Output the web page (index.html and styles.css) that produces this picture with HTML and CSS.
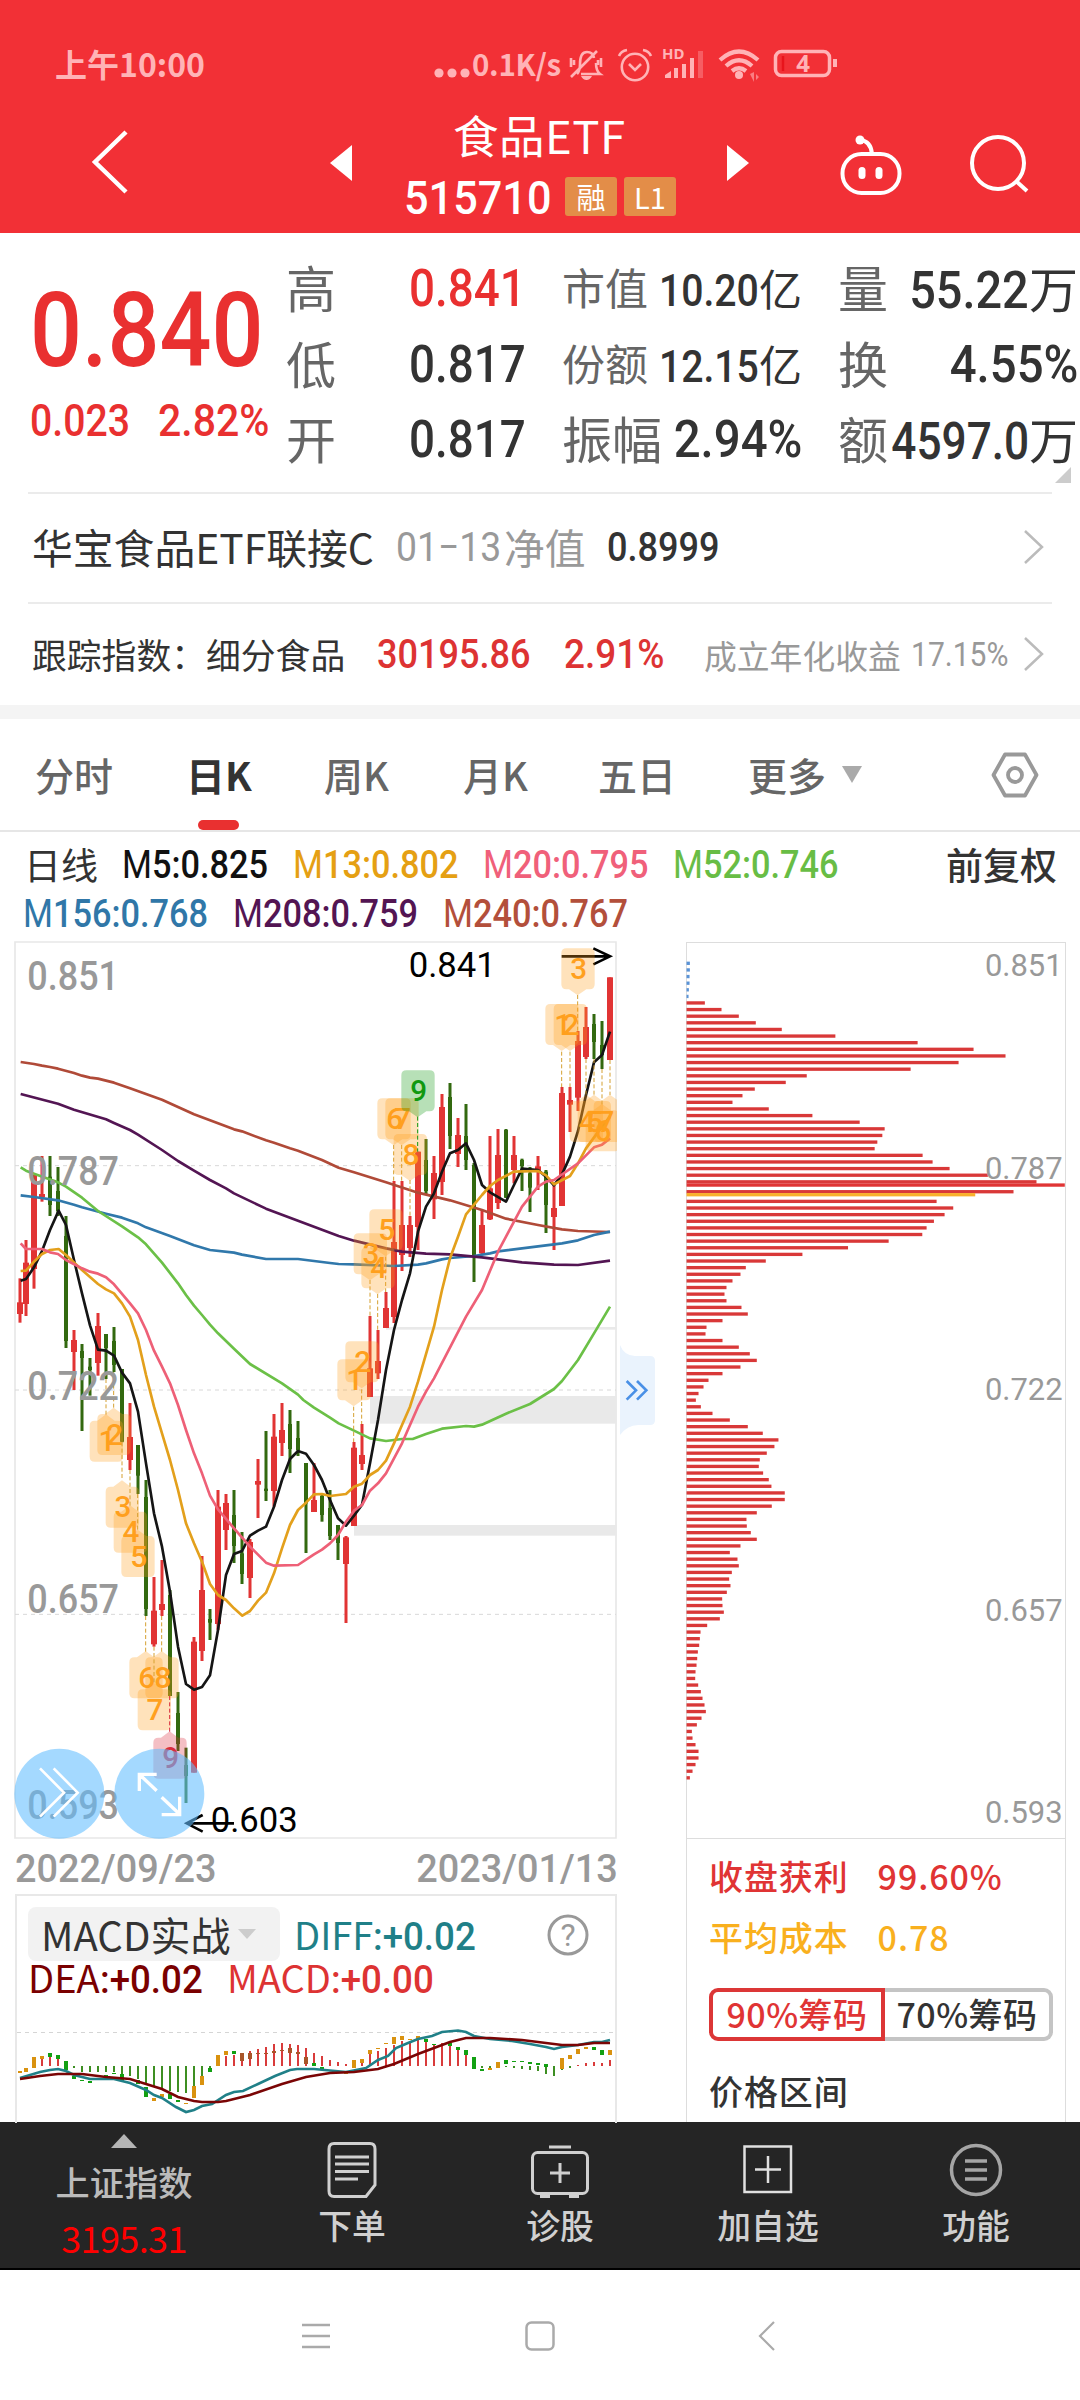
FILE: index.html
```html
<!DOCTYPE html>
<html lang="zh-CN">
<head>
<meta charset="utf-8">
<title>食品ETF 515710</title>
<link rel="stylesheet" href="styles.css">
</head>
<body>
<div class="screen">
  <header class="top">
    <div class="status">
      <span class="clock">上午10:00</span>
      <svg class="dots" width="36" height="10" viewBox="0 0 36 10"><circle cx="5" cy="5" r="4.6"/><circle cx="18" cy="5" r="4.6"/><circle cx="31" cy="5" r="4.6"/></svg>
      <span class="speed">0.1K/s</span>
      <svg class="status-icons" width="272" height="36" viewBox="568 47 272 36">
        <g fill="none" stroke="#ffb3b6" stroke-width="2.6">
          <path d="M577 74Q580 71 580 64Q580 52 587 52Q593 52 594 58M596 63Q596 71 600 74H581M571 77L597 51M571 58V67M574 60V65M601 58V67M598 60V65"/>
          <circle cx="635" cy="67" r="13.2"/><path d="M629 64L635 70L641 64M619 56Q621 51 627 50M651 56Q649 51 643 50"/>
        </g>
        <g fill="#ffb3b6">
          <path d="M581 76H592Q590 80 586.500 80Q583 80 581 76ZM665 78V75L671 71V78ZM674 68H678V78H674ZM682 64H686V78H682ZM690 58H694V78H690Z"/>
          <path d="M698 51H703V78H698Z" opacity=".35"/>
          <text x="662" y="59" class="hd">HD</text>
          <circle cx="739" cy="75" r="4"/>
          <path d="M750 74L754 82V72ZM756 74V80L759 77Z" opacity=".6"/>
        </g>
        <g fill="none" stroke="#ffb3b6" stroke-width="4.200"><path d="M720 60Q739 43 758 60M726 66Q739 54.500 752 66M732 71Q739 65.500 746 71"/></g>
        <rect x="775.500" y="51.500" width="54" height="24" rx="6" fill="none" stroke="#ffb3b6" stroke-width="3.500"/>
        <path d="M783 56V71" stroke="#e8141c" stroke-width="2.500"/><path d="M835 59V67" stroke="#ffb3b6" stroke-width="4"/>
        <text x="803" y="71.500" text-anchor="middle" class="batt">4</text>
      </svg>
    </div>
    <div class="titlebar">
      <svg class="back" width="40" height="68" viewBox="90 128 40 68"><path d="M126 132L95 162L126 192" fill="none" stroke="#fff" stroke-width="4.500"/></svg>
      <svg class="prev" width="22" height="36" viewBox="0 0 22 36"><path d="M22 0V36L0 18Z" fill="#fff"/></svg>
      <div class="title">
        <h1>食品ETF</h1>
        <div class="code"><span class="num code-num">515710</span><span class="tag tag-r">融</span><span class="tag tag-l">L1</span></div>
      </div>
      <svg class="next" width="22" height="36" viewBox="0 0 22 36"><path d="M0 0V36L22 18Z" fill="#fff"/></svg>
      <svg class="robot" width="66" height="64" viewBox="838 134 66 64"><g fill="none" stroke="#fff" stroke-width="4"><rect x="842.500" y="154" width="57" height="39" rx="19"/><path d="M860 140Q871 141 872 154"/></g><circle cx="860" cy="140" r="4.500" fill="#fff"/><rect x="858.500" y="167" width="7" height="12" rx="3.500" fill="#fff"/><rect x="875.500" y="167" width="7" height="12" rx="3.500" fill="#fff"/></svg>
      <svg class="search" width="64" height="60" viewBox="968 133 64 60"><g fill="none" stroke="#fff" stroke-width="4"><circle cx="998" cy="163" r="26"/><path d="M1016 181L1027 191"/></g></svg>
    </div>
  </header>

  <section class="quote">
    <div class="price">
      <div class="num last">0.840</div>
      <div class="chg"><span class="num">0.023</span><span class="num rate">2.82%</span></div>
    </div>
    <dl class="grid">
      <dt>高</dt><dd class="num up">0.841</dd><dt class="m s">市值</dt><dd class="mix s"><span class="num">10.20</span>亿</dd><dt class="r">量</dt><dd class="mix"><span class="num">55.22</span>万</dd>
      <dt>低</dt><dd class="num">0.817</dd><dt class="m s">份额</dt><dd class="mix s"><span class="num">12.15</span>亿</dd><dt class="r">换</dt><dd class="num rate">4.55%</dd>
      <dt>开</dt><dd class="num">0.817</dd><dt class="m">振幅</dt><dd class="num rate">2.94%</dd><dt class="r">额</dt><dd class="mix"><span class="num long">4597.0</span>万</dd>
    </dl>
    <i class="corner"></i>
  </section>

  <section class="link fund">
    <span class="name">华宝食品ETF联接C</span>
    <span class="nav-date"><span class="num">01−13</span>净值</span>
    <span class="num nav-value">0.8999</span>
    <svg class="chev" width="22" height="38" viewBox="0 0 22 38"><path d="M2 3L19 19L2 35" fill="none" stroke="#bbb" stroke-width="2.500"/></svg>
  </section>
  <section class="link index">
    <span class="name">跟踪指数：细分食品</span>
    <span class="num idx">30195.86</span>
    <span class="num pct">2.91%</span>
    <span class="ann">成立年化收益</span><span class="num ann-n">17.15%</span>
    <svg class="chev" width="22" height="38" viewBox="0 0 22 38"><path d="M2 3L19 19L2 35" fill="none" stroke="#bbb" stroke-width="2.500"/></svg>
  </section>

  <nav class="tabs">
    <a>分时</a><a class="on">日K</a><a>周K</a><a>月K</a><a>五日</a><a>更多</a>
    <i class="caret"></i>
    <svg class="gear" width="48" height="46" viewBox="0 0 48 46"><g fill="none" stroke="#999" stroke-width="3.800"><path d="M14 2.500H34L45.500 23L34 43.500H14L2.500 23Z" stroke-linejoin="round"/><circle cx="24" cy="23" r="7"/></g></svg>
  </nav>

  <section class="legend">
    <div class="legend-row"><span class="kind">日线</span><span class="num ma m5"><b>M</b>5:0.825</span><span class="num ma m13"><b>M</b>13:0.802</span><span class="num ma m20"><b>M</b>20:0.795</span><span class="num ma m52"><b>M</b>52:0.746</span><span class="fq">前复权</span></div>
    <div class="legend-row second"><span class="num ma m156"><b>M</b>156:0.768</span><span class="num ma m208"><b>M</b>208:0.759</span><span class="num ma m240"><b>M</b>240:0.767</span></div>
  </section>

  <main class="charts">
    <div class="left">
      <svg id="kline" class="kline" width="660" height="912" viewBox="0 33 1980 2736"></svg>
      <div class="dates"><span class="num">2022/09/23</span><span class="num">2023/01/13</span></div>
      <div class="macd">
        <div class="macd-head">
          <span class="picker">MACD实战<i></i></span><span class="diff">DIFF<span class="num">:+0.02</span></span>
          <svg class="help" width="42" height="42" viewBox="0 0 42 42"><circle cx="21" cy="21" r="19" fill="none" stroke="#999" stroke-width="3"/><text x="21" y="32" text-anchor="middle">?</text></svg>
        </div>
        <div class="macd-sub"><span class="dea">DEA<span class="num">:+0.02</span></span><span class="mac">MACD<span class="num">:+0.00</span></span></div>
        <svg id="macd" class="macd-plot" width="598" height="121" viewBox="17 2000 598 121"></svg>
      </div>
    </div>
    <aside class="chips">
      <svg id="chips" class="chips-plot" width="380" height="896" viewBox="79 35 1140 2688"></svg>
      <div class="stats">
        <p class="win"><span>收盘获利</span><span>99.60%</span></p>
        <p class="avg"><span>平均成本</span><span>0.78</span></p>
        <div class="seg"><span class="on">90%筹码</span><span>70%筹码</span></div>
        <p class="range">价格区间</p>
      </div>
    </aside>
  </main>

  <footer class="bar">
    <div class="mkt"><i></i><span>上证指数</span><b>3195.31</b></div>
    <div class="act"><svg width="60" height="58" viewBox="322 2141 60 58"><g fill="none" stroke="#d0d0d0" stroke-width="3"><path d="M334 2143.500H370Q375 2143.500 375 2149V2185L366 2196.500H334Q329 2196.500 329 2191V2149Q329 2143.500 334 2143.500Z"/><path d="M335 2157H369M335 2164H369M335 2171.500H369M335 2179H358"/></g></svg><span>下单</span></div>
    <div class="act"><svg width="60" height="58" viewBox="530 2141 60 58"><g fill="none" stroke="#d0d0d0" stroke-width="3"><rect x="532.500" y="2152.500" width="55" height="41" rx="5"/><path d="M549 2147H571M550 2173H570M560 2163V2183M540 2196.500H550M569 2196.500H579"/></g></svg><span>诊股</span></div>
    <div class="act"><svg width="60" height="58" viewBox="738 2141 60 58"><g fill="none" stroke="#e0e0e0" stroke-width="2.500"><path d="M744.500 2146.500H791V2192H744.500ZM755 2169.500H781M768 2156V2183"/></g></svg><span>加自选</span></div>
    <div class="act"><svg width="60" height="58" viewBox="946 2141 60 58"><g fill="none" stroke="#a5a5a5" stroke-width="3.500"><circle cx="976" cy="2170" r="24.500"/><path d="M965 2161H987M965 2170H987M965 2179H987"/></g></svg><span>功能</span></div>
  </footer>
  <div class="sysnav">
    <svg width="30" height="30" viewBox="0 0 30 30"><path d="M1 4H29M1 15H29M1 26H29" stroke="#aaa" stroke-width="2.500"/></svg>
    <svg width="30" height="30" viewBox="0 0 30 30"><rect x="1.500" y="1.500" width="27" height="27" rx="5" fill="none" stroke="#aaa" stroke-width="2.500"/></svg>
    <svg width="30" height="30" viewBox="0 0 30 30"><path d="M22 1L8 15L22 29" fill="none" stroke="#aaa" stroke-width="2.200"/></svg>
  </div>
</div>
<script src="charts.js"></script>
</body>
</html>
```

FILE: styles.css
```css
*{box-sizing:border-box;margin:0;padding:0}
body{background:#fff;font-family:"Noto Sans CJK SC","Noto Sans",sans-serif;color:#333}
i,b{font-style:normal;font-weight:inherit}
svg{display:block;flex:none;overflow:visible}
.screen{width:1080px;height:2400px;display:flex;flex-direction:column;overflow:hidden}
.screen>*{flex:none}
.num{font-family:Roboto,"Noto Sans CJK SC",sans-serif;font-weight:500;white-space:nowrap;display:inline-block;transform:scaleX(.88);transform-origin:left center}

/* header */
.top{height:233px;background:#f23036;color:#fff}
.status{height:108px;padding:38px 0 0 55px;display:flex;align-items:flex-start;color:#ffb3b6}
.clock{font-size:32px;line-height:50px;font-weight:700;width:379px}
.dots{fill:#ffb3b6;margin-top:30px}
.speed{font-size:29.500px;line-height:50px;font-weight:700;width:100px;margin-left:2px;letter-spacing:-.3px}
.status-icons{margin:9px 0 0 -4px}
.hd{font:700 15px "Noto Sans",sans-serif}
.batt{font:700 24px "Noto Sans",sans-serif;fill:#ffb3b6}
.titlebar{height:125px;display:flex;align-items:flex-start}
.back{margin:20px 0 0 90px}
.prev{margin:37px 0 0 200px}
.title{width:375px;display:flex;flex-direction:column;padding-left:52px}
.title h1{font-size:45.500px;font-weight:400;line-height:60px;height:60px;padding-left:49px;letter-spacing:.5px;margin-top:-4px}
.code{display:flex;align-items:center;height:44px;margin-top:11px;gap:7px}
.code-num{font-size:47px;width:154px;transform:scaleX(.92)}
.tag{height:39px;width:52px;background:#e38d48;border-radius:3px;font-size:29px;line-height:38px;text-align:center;margin-top:-1px}
.next{margin-top:37px}
.robot{margin:26px 0 0 89px}
.search{margin:25px 0 0 64px}

/* quote */
.quote{height:259px;display:flex;position:relative;color:#333}
.price{width:286px;padding:34px 0 0 30px;color:#e93030}
.last{font-size:104px;line-height:128px;height:128px}
.chg{display:flex}
.chg .num{font-size:45px;line-height:52px;width:128px;transform:scaleX(.87)}
.chg .rate{transform:scaleX(.91)}
.grid{display:grid;grid-template-columns:56px 184px 138px 138px 60px 216px;grid-template-rows:repeat(3,75.500px);padding-top:17px}
.grid dt{color:#666;font-size:50px;line-height:72px;white-space:nowrap}
.grid dt.m{padding-left:36px}
.grid dt.r{padding-left:36px}
.grid dt.s{font-size:43px}
.grid dd{font-size:52px;line-height:78px;text-align:right;justify-self:end;transform-origin:right center;white-space:nowrap}
.grid dd.rate{transform:scaleX(.91)}
.grid dd.mix{font-size:49px;line-height:74px}
.grid dd.mix .num{font-size:52px;transform-origin:right center;transform:scaleX(.9)}
.grid dd.mix .long{transform:scaleX(.85)}
.grid dd.mix.s{font-size:43px;line-height:74px}
.grid dd.mix.s .num{font-size:45px;transform:scaleX(.87)}
.up{color:#e93030}
.corner{position:absolute;right:9px;bottom:9px;border:8px solid;border-color:transparent #ccc #ccc transparent}

/* link rows */
.link{height:110px;margin:0 28px;border-top:2px solid #ebebeb;padding-left:4px;display:flex;align-items:center;white-space:nowrap}
.link .chev{margin-left:auto;margin-right:7px}
.fund{font-size:40.800px;padding-bottom:3px}
.fund .name{width:364px}
.nav-date{color:#999;display:flex;align-items:center;width:211px}
.nav-date .num{font-weight:400;font-size:41px;width:108px;transform:scaleX(.91)}
.nav-value{font-size:41px}
.index{height:103px;font-size:34.800px;padding-bottom:1px}
.index .name{width:345px}
.idx{font-size:41px;width:187px;color:#d33}
.pct{font-size:41px;width:140px;color:#d33;transform:scaleX(.9)}
.ann{font-size:32.800px;color:#999;width:207px}
.ann-n{font-size:33px;color:#999;font-weight:400;transform:scaleX(.91)}

/* tabs */
.tabs{height:127px;border-top:14px solid #f4f4f4;border-bottom:2px solid #e6e6e6;display:flex;align-items:center;font-size:39px;font-weight:500;color:#666;padding:0 41px 0 35px;white-space:nowrap}
.tabs a{position:relative;width:138px;line-height:56px;top:-1px}
.tabs a:nth-child(1){width:151px}.tabs a:nth-child(4){width:135px}.tabs a:nth-child(5){width:150px}.tabs a:nth-child(6){width:94px}.tabs a:nth-child(3){width:139px}
.tabs .on{font-weight:700;color:#333}
.tabs .on::after{content:"";position:absolute;left:12px;bottom:-28px;width:41px;height:10px;border-radius:5px;background:#e93030}
.caret{border:10px solid transparent;border-top:17px solid #aaa;border-bottom:0}
.gear{margin-left:auto}

/* moving average legend */
.legend{height:109px;padding:7px 20px 0 24px}
.legend-row{display:flex;align-items:center;height:52px;font-size:37px}
.kind,.fq{margin-top:-2px}
.legend-row.second{height:48px;margin-top:-1px;margin-left:-1px}
.kind{width:98px}
.ma{font-size:39px;width:190px;transform:scaleX(.88)}
.ma b{font-weight:400}
.m5{width:171px;color:#111}.m13{color:#e5a013}.m20{color:#f0607a}.m52{color:#68bd45;width:273px}
.second .ma{width:210px}
.m156{color:#3077a8}.m208{color:#531553}.m240{color:#b34f3b}
.fq{font-weight:500}

/* charts */
.charts{height:1182px;display:flex;overflow:hidden}
.left{width:686px}
.dates{display:flex;justify-content:space-between;height:42px;width:603px;margin-left:15px;color:#999;font-size:39px;line-height:34px;margin-top:-1px}
.dates .num{transform:scaleX(.97)}
.dates .num:last-child{transform-origin:right center}
.macd{margin-left:15px;width:602px;height:240px;border:2px solid #e8e8e8;position:relative}
.macd-head{display:flex;padding:11px 0 0 11px;line-height:54px;white-space:nowrap}
.picker{width:252px;height:54px;background:#f2f2f2;border-radius:8px;padding-left:13px;display:flex;align-items:center;font-size:40px}
.picker i{margin-left:8px;border:9px solid transparent;border-top:10px solid #ccc;border-bottom:0}
.diff{color:#1f8088;margin-left:14px;width:253px;font-size:38px}
.macd .num{font-size:39px;transform:scaleX(.94)}
.help{margin-top:7px}
.help text{font:32px Roboto,sans-serif;fill:#999}
.macd-sub{display:flex;padding-left:11px;font-size:38px;line-height:44px;height:38px;margin-top:-9px;white-space:nowrap}
.dea{color:#7a0000;width:199px}.mac{color:#d33}
.macd-plot{display:block;margin-top:10px}
.chips{width:380px;border:1px solid #ddd;border-bottom:0;margin-top:1px}
.chips-plot{margin:0 -1px;border-bottom:1px solid #ddd}
.stats{padding-left:22px;font-size:34px;font-weight:500;letter-spacing:.9px;white-space:nowrap}
.stats p{line-height:50px}
.win,.avg{display:flex;gap:29px}
.win{color:#e03434;padding-top:12px}
.avg{color:#f9b01e;padding-top:11px}
.seg{display:flex;margin-top:26px;width:344px;height:53px;line-height:43px;text-align:center;letter-spacing:.5px}
.seg span{flex:1;border:4px solid #c4c4c4;border-left:0;border-radius:0 9px 9px 0}
.seg .on{flex:0 0 176px;border:4px solid #dc3636;border-radius:9px 0 0 9px;color:#e03434}
.range{padding-top:25px}

/* bottom bars */
.bar{height:148px;background:#252525;border-bottom:2px solid #000;display:flex;color:#d0d0d0;font-size:33.800px;font-weight:500;margin-top:-1px}
.mkt{width:248px;padding-right:0;display:flex;flex-direction:column;align-items:center}
.mkt i{border:13px solid transparent;border-bottom:14px solid #b5b5b5;border-top:0;margin-top:12px}
.mkt span{line-height:50px;margin-top:8px;color:#bbb;font-size:34.200px}
.mkt b{color:#f00;font:400 36px/50px "Noto Sans CJK SC",sans-serif;margin-top:6px;letter-spacing:-.6px}
.act{width:208px;display:flex;flex-direction:column;align-items:center;padding-top:19px}
.act span{line-height:50px;margin-top:1px}
.sysnav{height:131px;display:flex;padding:51px 0 0 301px;gap:194px}
.sysnav svg:last-child{margin-left:3px}
.kline text{font-family:Roboto,sans-serif}
```

FILE: charts.js
```js
const NS = "http://www.w3.org/2000/svg";
const RED = "#e13434", GREEN = "#32690f", ORANGE = "#f9a11f";

function add(parent, tag, attrs, text) {
  const el = document.createElementNS(NS, tag);
  for (const k in attrs) el.setAttribute(k, attrs[k]);
  if (text !== undefined) el.textContent = text;
  parent.appendChild(el);
  return el;
}

/* ---------- K line ---------- */
const k = document.getElementById("kline");
add(k, "path", { d: "M45 36H1848V2724H45Z", fill: "none", stroke: "#e8e8e8", "stroke-width": 5 });
for (const y of [707, 1380, 2053])
  add(k, "path", { d: `M45 ${y}H1848`, stroke: "#d8d8d8", "stroke-width": 3, "stroke-dasharray": "12 12" });
for (const [x, y, h] of [[1158, 1191, 8], [1110, 1398, 83], [1062, 1785, 32]])
  add(k, "rect", { x, y, width: 1850 - x, height: h, fill: "#e9e9e9" });

// x, rising flag, high, body top, body bottom, low
const candles = [
  [60,1,1045,1117,1152,1178],[78,1,930,998,1122,1158],[102,1,735,735,1017,1076],[126,1,678,792,802,815],
  [150,0,678,740,825,858],[174,0,711,783,843,858],[198,0,858,918,1233,1254],[222,1,1200,1230,1266,1380],
  [246,0,1242,1263,1284,1503],[270,0,1284,1310,1320,1397],[294,1,1149,1188,1299,1337],[318,0,1212,1212,1254,1347],
  [342,0,1191,1233,1305,1326],[366,0,1317,1317,1535,1537],[390,1,1419,1521,1590,1620],[414,0,1545,1545,1637,1692],
  [438,0,1650,1701,2037,2058],[462,1,1941,2042,2143,2150],[486,1,1890,2022,2040,2058],[510,0,1980,1995,2298,2298],
  [534,0,2286,2349,2442,2463],[558,0,2453,2505,2538,2619],[582,1,2121,2135,2528,2528],[606,1,1878,1980,2163,2193],
  [630,0,2037,2067,2078,2130],[654,1,1680,1730,2082,2100],[678,1,1692,1719,1800,1860],[702,0,1680,1755,1848,1899],
  [726,0,1806,1870,1932,1962],[750,1,1827,1836,1944,2004],[774,1,1587,1653,1664,1764],[798,0,1503,1676,1683,1713],
  [822,1,1452,1520,1683,1730],[846,1,1419,1500,1539,1578],[870,0,1440,1482,1557,1629],[894,0,1473,1524,1560,1578],
  [918,0,1599,1599,1720,1869],[942,1,1599,1710,1746,1746],[966,0,1692,1698,1755,1775],[990,0,1680,1734,1818,1830],
  [1014,0,1785,1785,1839,1890],[1038,1,1818,1822,1902,2079],[1062,1,1536,1553,1788,1788],[1086,1,1482,1575,1602,1620],
  [1110,1,1158,1315,1401,1401],[1134,1,1200,1293,1330,1347],[1158,1,1086,1134,1194,1194],[1182,1,753,936,1161,1179],
  [1206,1,753,885,975,1023],[1230,1,858,885,954,981],[1254,1,665,665,891,960],[1278,0,627,690,783,795],
  [1302,1,678,729,808,867],[1326,1,492,531,756,795],[1350,0,459,501,618,657],[1374,1,564,615,672,711],
  [1398,0,522,618,690,720],[1422,0,699,705,978,1056],[1446,1,840,885,970,975],[1470,1,618,775,868,870],
  [1494,1,597,675,819,837],[1518,0,597,600,803,804],[1542,1,618,675,720,760],[1566,0,686,690,708,783],
  [1590,0,711,730,773,846],[1614,1,678,709,722,780],[1638,0,720,725,825,909],[1662,1,765,834,861,960],
  [1686,1,471,489,828,828],[1710,1,471,510,524,606],[1734,1,303,333,503,543],[1758,1,231,291,381,387],
  [1782,0,252,282,336,387],[1806,0,273,345,375,417],[1830,1,142,142,390,390]
];
for (const [x, up, hi, t, b, lo] of candles) {
  const w = up ? 18 : 12, fill = up ? RED : GREEN;
  add(k, "rect", { x: x - 4.5, y: hi, width: 9, height: lo - hi, fill });
  add(k, "rect", { x: x - w / 2, y: t, width: w, height: Math.max(b - t, 4), fill });
}

const lines = {
  "#b04a38": "62,396 102,402 126,407 150,411 174,416 222,429 246,437 270,443 294,446 342,458 390,475 438,492 486,509 534,531 582,553 630,571 702,598 726,604 798,631 822,638 870,655 894,662 966,690 1016,713 1062,727 1158,757 1254,788 1350,811 1446,840 1518,866 1614,885 1686,898 1734,903 1830,906",
  "#3078ab": "62,796 102,801 174,811 222,824 246,832 318,851 366,863 414,880 438,892 510,918 582,946 630,960 702,968 726,974 798,987 894,987 990,999 1016,1002 1062,1003 1182,1008 1254,1004 1278,1000 1326,988 1350,984 1422,978 1470,970 1494,964 1614,949 1686,940 1734,931 1782,915 1830,905",
  "#531553": "62,492 174,521 222,539 318,568 342,579 390,600 414,614 486,660 534,693 582,722 630,750 678,775 702,790 798,836 894,872 1016,918 1062,932 1158,955 1206,965 1278,971 1350,973 1446,982 1518,991 1566,997 1662,1004 1734,1005 1830,992",
  "#6bc047": "62,712 78,722 102,731 174,757 198,770 246,803 294,843 366,889 414,922 438,943 486,998 534,1060 558,1095 582,1127 606,1155 630,1184 654,1210 702,1256 750,1302 846,1360 894,1394 910,1410 942,1433 990,1463 1016,1480 1062,1502 1110,1525 1158,1533 1206,1527 1238,1527 1278,1512 1326,1496 1398,1488 1422,1490 1446,1484 1518,1451 1590,1422 1662,1377 1686,1353 1734,1290 1782,1210 1830,1130",
  "#151515": "62,1052 78,1047 102,1012 126,963 150,900 176,842 198,885 222,990 246,1090 270,1186 294,1259 318,1262 342,1277 366,1328 390,1360 414,1445 438,1600 462,1750 486,1850 510,1985 534,2150 558,2262 582,2279 606,2271 630,2236 654,2100 678,1935 702,1872 726,1863 750,1817 774,1802 798,1790 822,1730 846,1650 870,1587 894,1563 918,1571 942,1605 966,1650 990,1710 1014,1765 1038,1787 1062,1757 1086,1724 1110,1600 1134,1470 1158,1320 1182,1200 1206,1110 1230,1030 1254,905 1278,830 1302,790 1326,725 1350,670 1374,660 1398,640 1422,690 1446,765 1470,787 1518,815 1542,765 1566,716 1614,720 1638,740 1662,766 1686,733 1710,680 1734,603 1758,495 1782,397 1806,375 1830,305",
  "#e3a01c": "62,1023 78,1022 102,995 126,972 150,960 176,957 198,975 246,1020 294,1062 318,1078 342,1090 366,1120 390,1160 414,1230 438,1335 462,1430 486,1510 510,1590 534,1680 558,1780 582,1840 606,1895 630,1962 654,1995 678,2010 702,2035 727,2057 750,2043 774,2012 798,1988 822,1930 846,1855 870,1785 894,1740 918,1718 942,1693 966,1692 990,1698 1038,1692 1062,1670 1086,1661 1110,1635 1134,1620 1158,1592 1182,1540 1206,1485 1230,1430 1254,1355 1302,1190 1326,1080 1350,985 1374,920 1398,853 1446,795 1470,768 1494,750 1542,725 1614,723 1638,736 1662,763 1710,738 1734,700 1758,655 1806,590 1830,560",
  "#ee6077": "62,940 78,957 126,957 150,967 174,972 198,990 246,1015 270,1025 294,1031 318,1042 342,1063 390,1120 414,1150 438,1200 462,1262 486,1310 510,1360 534,1425 558,1500 582,1570 606,1630 630,1697 654,1738 702,1795 750,1850 798,1898 822,1907 894,1905 942,1873 966,1859 990,1840 1014,1815 1038,1775 1062,1742 1086,1725 1110,1682 1134,1660 1158,1630 1206,1540 1254,1430 1278,1385 1302,1345 1398,1160 1446,1080 1494,965 1518,920 1542,875 1566,830 1614,770 1638,755 1662,750 1734,700 1782,652 1806,644 1830,625"
};
for (const c in lines)
  add(k, "polyline", { points: lines[c], fill: "none", stroke: c, "stroke-width": 8, "stroke-linejoin": "round" });

// arrows and extreme prices
const ink = { fill: "none", stroke: "#000", "stroke-width": 8 };
add(k, "path", { d: "M1685 79H1828M1780 55L1830 79L1780 103", ...ink });
add(k, "text", { x: 1226, y: 141, "font-size": 104 }, "0.841");

// sequence badges: digit, left edge, top edge, pointer direction (1 down, -1 up), leader start and end
const badges = [
  [3,1683,55,1,195,303],[1,1635,222,1,365,471],[2,1660,222,1,365,471],[6,1131,505,1,645,753],[7,1155,505,1,645,753],
  [8,1180,612,1,750,858],[9,1203,421,1,560,665],[5,1107,838,1,980,1086],[3,1060,910,1,1050,1158],[4,1083,952,1,1092,1200],
  [2,1035,1234,1,1378,1482],[1,1011,1288,1,1430,1536],
  [1,268,1472,-1,1347,1455],[2,291,1452,-1,1326,1433],[3,316,1670,-1,1537,1650],[4,340,1745,-1,1620,1728],
  [5,363,1818,-1,1692,1800],[6,387,2182,-1,2058,2165],[8,435,2182,-1,2058,2165],[7,412,2278,-1,2150,2262],
  [9,459,2423,-1,2298,2405],[4,1708,513,-1,387,495],[5,1732,513,-1,387,495],[6,1756,541,-1,417,523],[7,1780,513,-1,390,495]
];
const clip = add(add(k, "defs", {}), "clipPath", { id: "frame" });
add(clip, "rect", { x: 45, y: 36, width: 1806, height: 2690 });
const seq = add(k, "g", { "clip-path": "url(#frame)" });
for (const [n, x, y, dir, a, b] of badges) {
  const c = n === 9 ? (dir > 0 ? "#109810" : "#d92c3c") : "#ffa01e";
  const m = x + 50;
  const tip = dir > 0 ? `M${m - 26} ${y + 123}H${m + 26}L${m} ${y + 141}Z` : `M${m - 26} ${y}H${m + 26}L${m} ${y - 19}Z`;
  add(seq, "path", { d: `M${m} ${a}V${b}`, stroke: n === 9 ? c : "#d5a030", "stroke-width": 3, "stroke-dasharray": "12 7" });
  add(seq, "path", { d: `M${x + 16} ${y}h70q15 0 15 15v93q0 15 -15 15h-70q-15 0 -15 -15v-93q0 -15 15 -15z${tip}`, fill: c, opacity: .3 });
  add(seq, "text", { x: m + (x === 1780 ? -12 : 3), y: y + 92, "font-size": 89, "text-anchor": "middle", fill: c, "font-weight": 500 }, n);
}

for (const [t, y] of [["0.851", 180], ["0.787", 765], ["0.722", 1410], ["0.657", 2050], ["0.593", 2666]])
  add(k, "text", { x: 82, y, "font-size": 121, "font-weight": 500, fill: "#999", textLength: 275, lengthAdjust: "spacingAndGlyphs" }, t);

add(k, "path", { d: "M702 2680H562M608 2655L560 2680L608 2705", ...ink });
add(k, "text", { x: 632, y: 2705, "font-size": 104 }, "0.603");
add(k, "circle", { cx: 178, cy: 2591, r: 135, fill: "#62bdff", opacity: .58 });
add(k, "circle", { cx: 478, cy: 2591, r: 135, fill: "#62bdff", opacity: .58 });
add(k, "path", { d: "M120 2515L192 2588L120 2660M161 2515L233 2588L161 2660", fill: "none", stroke: "#fff", "stroke-width": 8 });
add(k, "path", { d: "M470 2582L418 2533M418 2583V2533H470M485 2602L539 2653M539 2600V2654H485", fill: "none", stroke: "#fff", "stroke-width": 10 });

// drawer handle
add(k, "path", { d: "M1860 1245Q1872 1277 1905 1278H1950Q1965 1278 1965 1293V1470Q1965 1485 1950 1485H1915Q1880 1487 1860 1515Z", fill: "#eaf3fd" });
add(k, "path", { d: "M1880 1353L1908 1381L1880 1409M1911 1353L1939 1381L1911 1409", fill: "none", stroke: "#4a90e6", "stroke-width": 8 });

/* ---------- MACD ---------- */
const m = document.getElementById("macd");
add(m, "path", { d: "M17 2029.5H615", stroke: "#d5d5d5", "stroke-dasharray": "4 4" });
const hist = [
  2055,2053,2052,2055,2062,2065,2069,2069,2069,2069,2069,2071,2073,2076,2080,2084,2086,2088,2089,2090,2083,2073,2068,
  2059,2053,2052,2051,2048,2046,2044,2041,2040,2041,2042,2045,2050,2053,2057,2059,2061,2060,2057,2051,2048,2045,2042,2038,
  2038,2036,2038,2041,2040,2042,2044,2052,2066,2065,2065,2064,2064,2065,2066,2067,2068,2071,2073,2067,2065,2062,2060,2059,2060,2057
];
hist.forEach((y, i) => add(m, "rect", {
  x: 33 + 8 * i, y: Math.min(y, 2063), width: 2, height: Math.abs(2063 - y), fill: y < 2063 ? "#d93b3b" : "#3d8f22"
}));
const Y = "#d9920f", G = "#12a012", B = "#a8552a";
[
  [20,2068,2070,Y],[26,2065,2069,Y],[34,2054,2065,Y],[42,2053,2056,Y],[50,2050,2054,G],[58,2052,2056,G],[66,2058,2067,G],
  [74,2073,2076,G],[82,2077,2078,G],[90,2078,2080,G],[106,2072,2073,G],[114,2070,2071,G],[122,2071,2078,G],[138,2077,2081,G],
  [146,2084,2094,G],[154,2095,2098,Y],[162,2091,2094,Y],[170,2091,2096,G],[178,2097,2099,G],[186,2100,2101,Y],[194,2083,2095,Y],
  [202,2073,2082,Y],[210,2065,2069,G],[218,2052,2063,Y],[226,2048,2052,Y],[234,2048,2051,G],[242,2050,2058,B],[250,2050,2056,B],
  [258,2050,2051,B],[266,2050,2051,B],[274,2048,2050,B],[282,2047,2048,B],[290,2045,2050,B],[298,2049,2051,B],[306,2054,2061,B],
  [314,2060,2063,G],[322,2064,2067,G],[330,2067,2068,G],[346,2069,2071,Y],[354,2057,2065,Y],[362,2056,2060,Y],[370,2047,2051,Y],
  [378,2045,2046,Y],[386,2040,2041,Y],[394,2034,2041,Y],[402,2033,2037,Y],[410,2036,2037,Y],[418,2033,2036,Y],[426,2036,2039,G],
  [434,2041,2042,G],[450,2040,2043,G],[458,2044,2047,G],[466,2047,2052,G],[474,2054,2066,G],[482,2066,2068,G],[490,2065,2067,Y],
  [498,2059,2065,Y],[506,2057,2061,G],[514,2058,2059,G],[522,2058,2059,G],[530,2059,2061,G],[538,2060,2062,G],[546,2061,2064,G],
  [562,2055,2066,Y],[570,2052,2056,Y],[578,2046,2051,Y],[586,2044,2046,Y],[594,2044,2047,G],[602,2047,2052,G],[610,2047,2052,Y]
].forEach(([x, a, b, c]) => add(m, "rect", { x: x - 2, y: a, width: 4, height: b - a, fill: c }));
add(m, "polyline", { fill: "none", stroke: "#208088", "stroke-width": 2.6, points: "20,2075 30,2072 40,2069 50,2067 58,2066 66,2068 74,2072 90,2076 114,2076 130,2080 146,2087 154,2092 162,2095 176,2104 186,2109 194,2107 202,2103 212,2101 226,2092 234,2089 243,2088 258,2081 275,2073 290,2067 297,2066 314,2066 346,2069 366,2065 378,2057 388,2053 396,2045 408,2040 418,2036 432,2033 442,2029 458,2027.500 466,2029 474,2033 490,2036 512,2038 530,2041 546,2044 554,2046 562,2044 578,2042 594,2039 602,2039 610,2037" });
add(m, "polyline", { fill: "none", stroke: "#7a0505", "stroke-width": 2.6, points: "20,2076 40,2073 58,2071 82,2071 106,2074 130,2076 146,2081 162,2086 178,2094 194,2098 202,2099 218,2099 226,2098 250,2092 282,2081 306,2074 330,2070 354,2069 378,2066 394,2061 418,2051 450,2039 466,2035 490,2035 522,2037 546,2040 562,2042 578,2042 594,2040 610,2040" });

/* ---------- chip distribution ---------- */
const d = document.getElementById("chips");
const bar = (y, end, fill) => add(d, "rect", { x: 80, y: y - 5, width: end - 80, height: 10, fill });
[90, 90, 89, 89, 87, 86].forEach((e, i) => bar(96 + 19.9 * i, e, "#5a93d6"));
[135,185,237,288,366,527,774,942,1038,897,753,441,378,285,248,218,327,458,600,675,668,653,645,789,819,870,985,1131]
  .forEach((e, i) => bar(215 + 19.9 * i, e, "#d93838"));
bar(762, 1216, "#e03434");
bar(782, 1062, "#d93838");
bar(791, 947, "#f9b02c");
[831,881,855,823,801,788,687,565,428,318,258,242,218,200,194,200,245,264,188,140,137,188,237,270,291,242,188,146,131,116,108,
 123,158,210,264,309,356,344,321,300,297,310,327,335,375,375,336,291,260,261,273,291,242,210,233,237,216,208,212,201,187,
 188,192,180,142,122,120,118,114,112,110,107,106,115,123,128,134,138,125,111,96,98,107,116,116,107,98,90]
  .forEach((e, i) => bar(811 + 19.9 * i, e, "#d93838"));
for (const [t, y] of [["0.851", 135], ["0.787", 745], ["0.722", 1407], ["0.657", 2070], ["0.593", 2679]])
  add(d, "text", { x: 976, y, "font-size": 93, fill: "#999", "font-family": "Roboto, sans-serif" }, t);
```
